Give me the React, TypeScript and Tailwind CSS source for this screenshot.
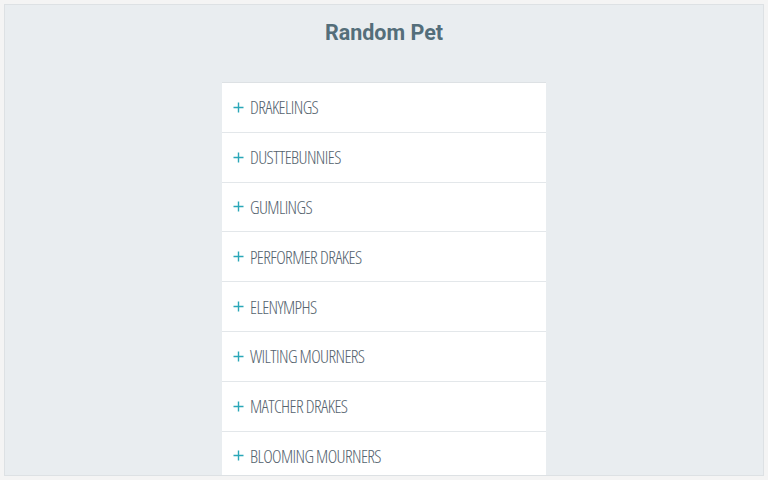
const pets = [
  "DRAKELINGS",
  "DUSTTEBUNNIES",
  "GUMLINGS",
  "PERFORMER DRAKES",
  "ELENYMPHS",
  "WILTING MOURNERS",
  "MATCHER DRAKES",
  "BLOOMING MOURNERS",
];

function PlusIcon() {
  return (
    <svg width="11" height="11" viewBox="0 0 11 11" className="shrink-0">
      <path d="M5.5 0.5v10M0.5 5.5h10" stroke="#2aa7b8" strokeWidth="1.4" fill="none" />
    </svg>
  );
}

export default function App() {
  return (
    <div className="h-[480px] w-full bg-[#f4f4f4] p-1">
      <div className="flex h-[472px] flex-col items-center overflow-hidden border border-[#dde1e4] bg-[#e9edf0]">
        <h1
          className="mt-[14px] text-[21.5px] font-bold leading-[28px] text-[#546e7a]"
          style={{ fontFamily: "Roboto, sans-serif" }}
        >
          Random Pet
        </h1>
        <ul className="mt-[35px] w-[324px] border-t border-[#dde1e4] bg-white">
          {pets.map((p) => (
            <li
              key={p}
              className="flex h-[49.8px] items-center gap-[6px] border-b border-[#e3e7ea] pl-[11px]"
            >
              <PlusIcon />
              <span
                className="text-[18px] font-light leading-none tracking-[-0.6px] text-[#55636e]"
                style={{ fontFamily: '"Open Sans", sans-serif', fontStretch: "75%" }}
              >
                {p}
              </span>
            </li>
          ))}
        </ul>
      </div>
    </div>
  );
}
